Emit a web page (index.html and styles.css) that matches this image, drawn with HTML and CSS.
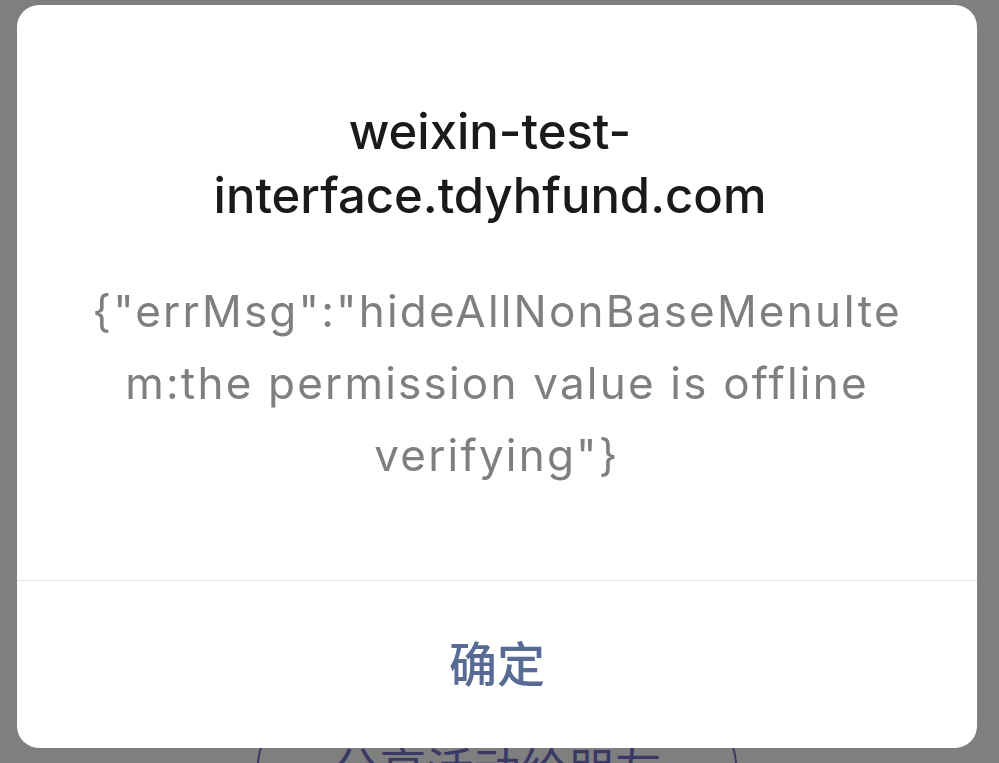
FILE: index.html
```html
<!DOCTYPE html>
<html lang="zh">
<head>
    <meta charset="UTF-8">
    <title>活动</title>
    <link rel="stylesheet" href="styles.css">
</head>
<body>
    <div class="page">
        <button class="share-btn">分享活动给朋友</button>
    </div>

    <div class="mask">
        <div class="dialog">
            <div class="dialog-bd">
                <h2 class="dialog-title">weixin-test-interface.tdyhfund.com</h2>
                <p class="dialog-msg">{"errMsg":"hideAllNonBaseMenuItem:the permission value is offline verifying"}</p>
            </div>
            <div class="dialog-ft">
                <a class="dialog-btn">确定</a>
            </div>
        </div>
    </div>
</body>
</html>
```

FILE: styles.css
```css
body, html {
    margin: 0;
    padding: 0;
    height: 100%;
    overflow: hidden;
    background-color: #fff;
    font-family: Inter, "Noto Sans CJK SC", sans-serif;
    font-variant-ligatures: none;
}
.page {
    padding-top: 711px;
}
.share-btn {
    display: block;
    width: 480px;
    height: 110px;
    margin: 0 0 0 257px;
    border: 2px solid #7570c8;
    border-radius: 55px;
    background-color: #fff;
    color: #7570c8;
    font-family: "Noto Sans CJK SC", sans-serif;
    font-size: 47px;
}
.mask {
    position: fixed;
    top: 0;
    left: 0;
    right: 0;
    bottom: 0;
    display: flex;
    padding: 5px 22px 15px 17px;
    background-color: rgba(0, 0, 0, 0.5);
}
.dialog {
    flex: 1;
    display: flex;
    flex-direction: column;
    background-color: #fff;
    border-radius: 22px;
    overflow: hidden;
}
.dialog-bd {
    flex: 1;
    padding: 95px 68px 0;
    text-align: center;
}
.dialog-title {
    margin: 0 0 47px;
    padding-right: 14px;
    font-size: 49px;
    font-weight: 500;
    line-height: 64px;
    color: #1a1a1a;
}
.dialog-msg {
    margin: 0;
    font-size: 44px;
    letter-spacing: 2.2px;
    line-height: 72px;
    color: #7f7f7f;
    overflow-wrap: anywhere;
}
.dialog-ft {
    height: 167px;
    display: flex;
    align-items: center;
    justify-content: center;
    border-top: 1px solid #e5e5e5;
}
.dialog-btn {
    padding-bottom: 8px;
    font-family: "Noto Sans CJK SC", sans-serif;
    font-size: 48px;
    font-weight: 500;
    color: #576b95;
}
```
